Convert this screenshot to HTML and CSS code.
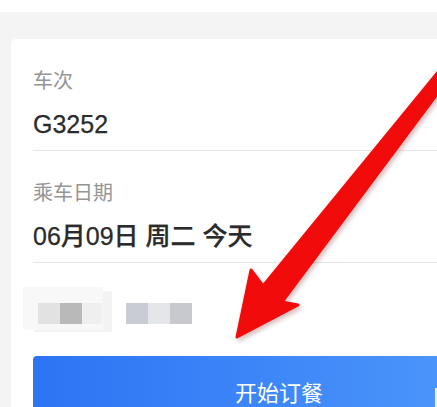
FILE: index.html
```html
<!DOCTYPE html>
<html lang="zh-CN">
<head>
<meta charset="utf-8">
<title>订餐</title>
<link rel="stylesheet" href="styles.css">
</head>
<body>
<div class="page">
  <div class="topbar"></div>
  <main class="content">
    <section class="card">
      <div class="field">
        <div class="label">车次</div>
        <div class="value">G3252</div>
      </div>
      <div class="field">
        <div class="label">乘车日期</div>
        <div class="value">06月09日 周二 今天</div>
      </div>
      <div class="blur-row">
        <div class="blur-group halo">
          <span class="blk b1"></span><span class="blk b2"></span><span class="blk b3"></span>
        </div>
        <div class="blur-group plain">
          <span class="blk c1"></span><span class="blk c2"></span><span class="blk c3"></span>
        </div>
      </div>
      <button class="primary">开始订餐<span class="edge"></span></button>
    </section>
  </main>
  <svg class="arrow" width="437" height="407" viewBox="0 0 437 407" aria-hidden="true">
    <polygon points="452,55 263,286 251,270 237,337 298,305 282,302 452,74" fill="#f20b0b" stroke="#f20b0b" stroke-width="3" stroke-linejoin="round"/>
  </svg>
</div>
</body>
</html>
```
FILE: styles.css
```css
html, body {
  margin: 0;
  padding: 0;
  overflow: hidden;
  background: #f4f4f4;
}
.page {
  position: relative;
  width: 437px;
  height: 407px;
  overflow: hidden;
  font-family: "Liberation Sans", "Noto Sans CJK SC", sans-serif;
}
.topbar {
  height: 12px;
  background: #ffffff;
}
.content {
  padding: 27px 0 0 11px;
  width: 536px;
}
.card {
  background: #ffffff;
  border-radius: 5px;
  padding: 0 22px 30px 22px;
  width: 492px;
}
.field {
  padding-top: 28px;
  padding-bottom: 8px;
  border-bottom: 1px solid #e6e6e6;
}
.label {
  font-size: 20px;
  line-height: 28px;
  color: #959595;
}
.value {
  margin-top: 11px;
  font-size: 25px;
  line-height: 36px;
  color: #2b2b2b;
  font-weight: 500;
  -webkit-text-stroke: 0.25px #2b2b2b;
  white-space: pre;
}
.blur-row {
  display: flex;
  align-items: flex-start;
  margin-top: 24px;
}
.blur-group {
  display: flex;
}
.halo {
  margin-left: -10px;
  padding: 16px 1px 6px 15px;
  background: #f8f8f8;
  box-shadow: 10px 3px 0 -1px #f3f3f3;
}
.plain {
  margin-left: 23px;
  margin-top: 16px;
}
.blk {
  display: block;
  width: 22px;
  height: 21px;
}
.b1 { background: #e2e2e2; }
.b2 { background: #b9b9b9; }
.b3 { background: #efefef; width: 20px; }
.c1 { background: #c9ccd3; }
.c2 { background: #e5e6e9; }
.c3 { background: #c7c9cf; }
.primary {
  position: relative;
  display: block;
  width: 100%;
  height: 70px;
  margin-top: 26px;
  border: none;
  border-radius: 4px;
  background: linear-gradient(90deg, #2c74f4 0%, #4a94fb 82%, #55a0fd 100%);
  color: #ffffff;
  font-family: "Noto Sans CJK SC", sans-serif;
  font-size: 22px;
  line-height: 68px;
  padding: 0;
  text-align: center;
}
.edge {
  position: absolute;
  left: 402px;
  top: 32px;
  width: 8px;
  height: 26px;
  background: #e9f1ff;
}
.arrow {
  position: absolute;
  left: 0;
  top: 0;
  filter: drop-shadow(2px 3px 2px rgba(90, 0, 0, 0.25));
}
```
